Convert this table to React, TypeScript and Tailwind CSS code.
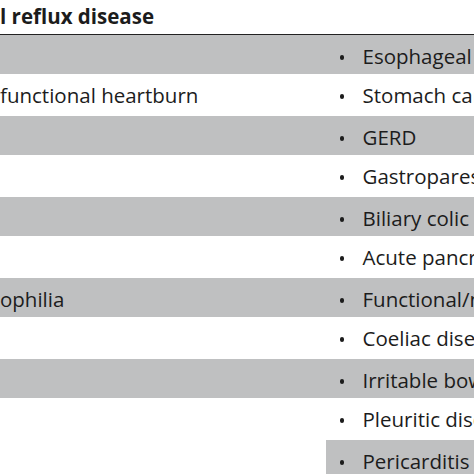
const rows = [
  { left: '', right: 'Esophageal cancer', shade: 'both' },
  { left: 'functional heartburn', right: 'Stomach cancer', shade: 'none' },
  { left: '', right: 'GERD', shade: 'both' },
  { left: '', right: 'Gastroparesis', shade: 'none' },
  { left: '', right: 'Biliary colic', shade: 'both' },
  { left: '', right: 'Acute pancreatitis', shade: 'none' },
  { left: 'ophilia', right: 'Functional/non-ulcer dyspepsia', shade: 'both' },
  { left: '', right: 'Coeliac disease', shade: 'none' },
  { left: '', right: 'Irritable bowel syndrome', shade: 'both' },
  { left: '', right: 'Pleuritic disease', shade: 'none' },
  { left: '', right: 'Pericarditis', shade: 'right' },
];

export default function App() {
  return (
    <div className="w-[474px] h-[474px] overflow-hidden bg-white text-[#1c1c1c] font-['Open_Sans',sans-serif] text-[20.5px] leading-[28px]">
      {/* header */}
      <div className="h-[35px] border-b-[1.5px] border-[#222] pt-[2px] font-bold whitespace-nowrap">
        l reflux disease
      </div>

      {rows.map((row, i) => {
        const gray = row.shade === 'both';
        return (
          <div
            key={i}
            className={`flex whitespace-nowrap ${gray ? 'h-[39px] bg-[#bfc0c1]' : 'h-[42px] bg-white'} ${row.shade === 'right' ? 'h-[60px]' : ''}`}
          >
            <div className="w-[326px] shrink-0 pt-[7px] overflow-hidden">{row.left}</div>
            <div
              className={`flex-1 flex items-start pt-[7px] pl-[13.5px] overflow-hidden ${row.shade === 'right' ? 'bg-[#bfc0c1]' : ''}`}
            >
              <span className="mt-[13px] w-[4.5px] h-[4.5px] rounded-full bg-[#1c1c1c] shrink-0" />
              <span className="ml-[18.5px]">{row.right}</span>
            </div>
          </div>
        );
      })}
    </div>
  );
}
